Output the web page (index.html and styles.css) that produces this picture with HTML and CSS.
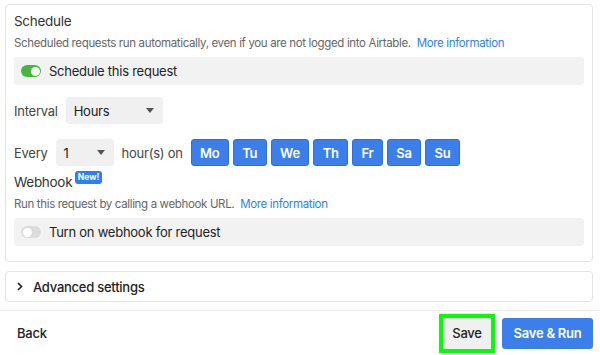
FILE: index.html
```html
<!DOCTYPE html>
<html>
<head>
  <title>Schedule request</title>
  <link rel="stylesheet" href="styles.css">
</head>
<body>
  <div class="card">
    <h2 class="section-title">Schedule</h2>
    <p class="section-desc">Scheduled requests run automatically, even if you are not logged into Airtable. <a href="#" class="more">More information</a></p>

    <div class="toggle-row">
      <span class="toggle on"></span>
      <span>Schedule this request</span>
    </div>

    <div class="field-row interval-row">
      <span class="label">Interval</span>
      <div class="select select-wide">
        <span>Hours</span>
        <span class="caret"></span>
      </div>
    </div>

    <div class="field-row every-row">
      <span class="label">Every</span>
      <div class="select select-narrow">
        <span>1</span>
        <span class="caret"></span>
      </div>
      <span class="label">hour(s) on</span>
      <div class="days">
        <button class="day">Mo</button>
        <button class="day">Tu</button>
        <button class="day">We</button>
        <button class="day">Th</button>
        <button class="day">Fr</button>
        <button class="day">Sa</button>
        <button class="day">Su</button>
      </div>
    </div>

    <h2 class="section-title webhook-title">Webhook <span class="badge">New!</span></h2>
    <p class="section-desc">Run this request by calling a webhook URL. <a href="#" class="more">More information</a></p>

    <div class="toggle-row">
      <span class="toggle"></span>
      <span>Turn on webhook for request</span>
    </div>
  </div>

  <div class="card advanced">
    <svg class="chevron" width="6" height="9" viewBox="0 0 6 9">
      <path d="M1 1 L4.5 4.5 L1 8" fill="none" stroke="#222" stroke-width="1.6"/>
    </svg>
    <span>Advanced settings</span>
  </div>

  <div class="footer">
    <a href="#" class="back">Back</a>
    <div class="actions">
      <span class="highlight">
        <button class="btn btn-save">Save</button>
      </span>
      <button class="btn btn-primary">Save &amp; Run</button>
    </div>
  </div>
</body>
</html>
```

FILE: styles.css
```css
* {
  margin: 0;
  padding: 0;
  box-sizing: border-box;
}

body {
  font-family: 'Inter', 'Liberation Sans', sans-serif;
  background: white;
  color: #333;
  font-size: 13px;
  letter-spacing: -0.25px;
}

.card {
  margin: 4px 7px 0 5px;
  border: 1px solid #e4e4e4;
  border-radius: 4px;
  padding: 6px 8px 15px 8px;
}

.section-title {
  font-size: 13.5px;
  font-weight: 400;
  line-height: 20px;
  letter-spacing: -0.3px;
  color: #333;
}

.section-desc {
  margin-top: 3px;
  font-size: 11.5px;
  line-height: 18px;
  letter-spacing: -0.35px;
  color: #666;
}

.more {
  color: #2d7ff9;
  text-decoration: none;
  margin-left: 3px;
}

.toggle-row {
  margin-top: 5px;
  height: 28px;
  background: #f2f2f2;
  border-radius: 3px;
  display: flex;
  align-items: center;
  gap: 8px;
  padding-left: 7px;
  font-size: 13px;
  color: #222;
}

.toggle {
  width: 20px;
  height: 12px;
  border-radius: 6px;
  background: #dcdcdc;
  position: relative;
}

.toggle::after {
  content: "";
  position: absolute;
  top: 1.5px;
  left: 1.5px;
  width: 9px;
  height: 9px;
  border-radius: 50%;
  background: white;
}

.toggle.on {
  background: #43b83a;
}

.toggle.on::after {
  left: 9.5px;
}

.field-row {
  display: flex;
  align-items: center;
  gap: 8px;
  font-size: 13px;
}

.interval-row {
  margin-top: 12px;
}

.every-row {
  margin-top: 15px;
}

.label {
  color: #444;
}

.select {
  height: 27px;
  background: #f0f0f0;
  border-radius: 3px;
  display: flex;
  align-items: center;
  justify-content: space-between;
  padding: 0 9px 0 8px;
  color: #222;
}

.select-wide {
  width: 97px;
}

.select-narrow {
  width: 58px;
}

.caret {
  width: 0;
  height: 0;
  border-left: 4px solid transparent;
  border-right: 4px solid transparent;
  border-top: 5px solid #555;
}

.days {
  display: flex;
  gap: 4px;
}

.day {
  height: 27px;
  padding: 0 8.4px;
  background: #3d7fea;
  border: 1px solid #2f6fdb;
  border-radius: 3px;
  color: white;
  font-family: inherit;
  font-size: 13px;
  font-weight: 600;
  letter-spacing: -0.25px;
}

.webhook-title {
  margin-top: 6px;
}

.badge {
  position: relative;
  top: -7px;
  display: inline-block;
  background: #2d7ff9;
  color: white;
  font-size: 8.5px;
  font-weight: 700;
  line-height: 13px;
  letter-spacing: 0;
  padding: 0 3px;
  border-radius: 3px;
  margin-left: -1px;
}

.advanced {
  margin-top: 9px;
  height: 31px;
  padding: 0 11px;
  display: flex;
  align-items: center;
  gap: 10px;
  font-size: 13px;
  font-weight: 500;
  color: #222;
}

.footer {
  margin-top: 8px;
  border-top: 1px solid #ececec;
  height: 45px;
  display: flex;
  align-items: center;
  justify-content: space-between;
  padding: 0 7px 0 17px;
}

.back {
  color: #222;
  text-decoration: none;
  font-size: 13px;
  font-weight: 500;
}

.actions {
  display: flex;
  align-items: center;
  gap: 7px;
}

.highlight {
  display: flex;
  border: 4px solid #00ff00;
}

.btn {
  height: 31px;
  border: none;
  border-radius: 3px;
  font-family: inherit;
  font-size: 13px;
  font-weight: 600;
  letter-spacing: -0.25px;
}

.btn-save {
  width: 48px;
  background: #f0f0f0;
  color: #222;
  font-weight: 500;
  border-radius: 0;
}

.btn-primary {
  width: 91px;
  background: #3d7fea;
  color: white;
}
```
